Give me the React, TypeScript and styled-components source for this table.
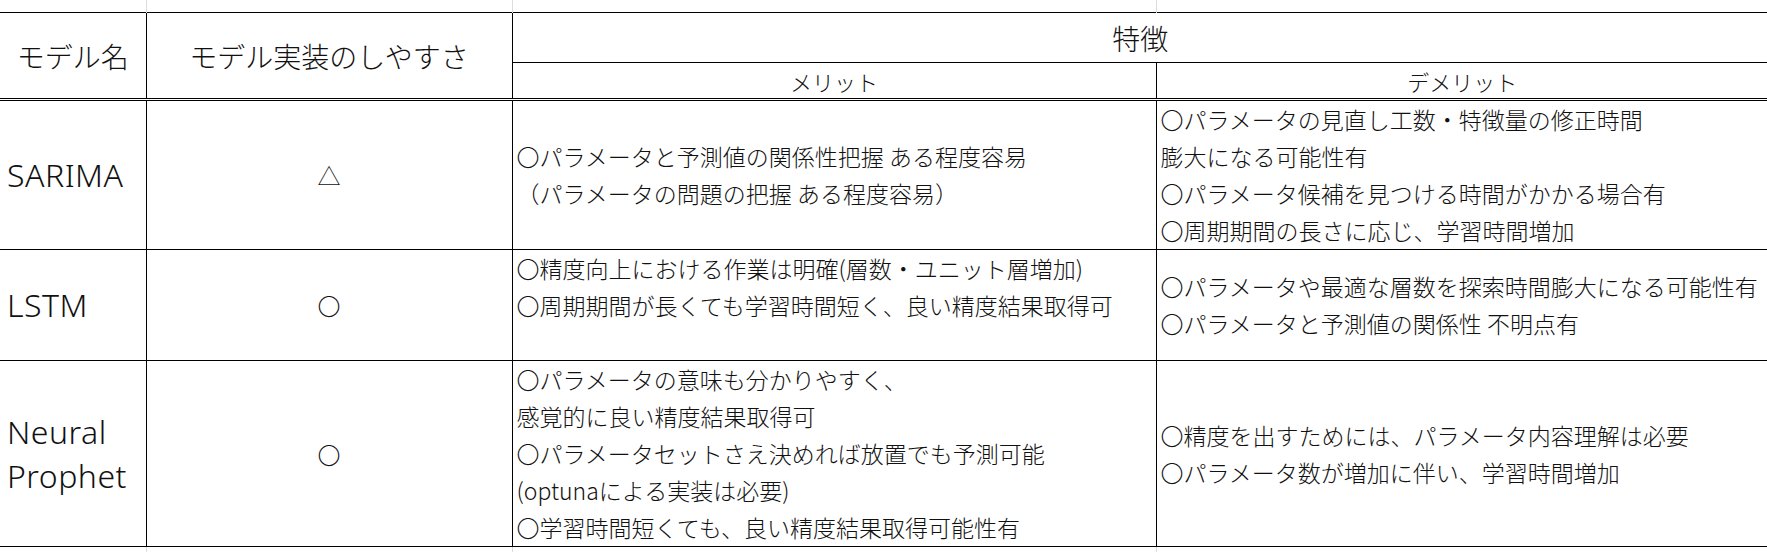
import styled, { createGlobalStyle } from "styled-components";

const GlobalStyle = createGlobalStyle`
  html, body {
    margin: 0;
    padding: 0;
    background: #fff;
  }
  body {
    font-family: "Noto Sans CJK JP", sans-serif;
    color: #111;
    overflow: hidden;
  }
`;

const Sheet = styled.table`
  border-collapse: collapse;
  table-layout: fixed;
  width: 1768px;
  td:last-child,
  th:last-child {
    border-right: none;
  }
`;

const GridCell = styled.td<{ $h: number }>`
  height: ${(p) => p.$h}px;
  padding: 0;
  border-right: 1px solid #dcdcdc;
`;

const HeadCell = styled.th<{ $size?: number; $double?: boolean }>`
  font-weight: 300;
  font-size: ${(p) => p.$size ?? 28}px;
  text-align: center;
  vertical-align: middle;
  padding: 0;
  border-top: 1px solid #000;
  border-right: 1px solid #000;
  border-bottom: ${(p) => (p.$double ? "3px double #000" : "1px solid #000")};
`;

const NameCell = styled.td`
  font-family: "Noto Sans", "Noto Sans CJK JP", sans-serif;
  font-weight: 300;
  font-size: 32px;
  line-height: 44px;
  letter-spacing: 0.5px;
  padding: 0 0 0 7px;
  vertical-align: middle;
  border-right: 1px solid #000;
  border-bottom: 1px solid #000;
`;

const MarkCell = styled.td`
  font-size: 23px;
  font-weight: 300;
  text-align: center;
  vertical-align: middle;
  padding: 0;
  border-right: 1px solid #000;
  border-bottom: 1px solid #000;
`;

const NoteCell = styled.td<{ $top?: boolean }>`
  font-size: 23px;
  font-weight: 300;
  line-height: 37px;
  padding: 0 4px;
  white-space: nowrap;
  overflow: hidden;
  vertical-align: ${(p) => (p.$top ? "top" : "middle")};
  border-right: 1px solid #000;
  border-bottom: 1px solid #000;
`;

const NoteLine = styled.div``;

interface IModel {
  name: string[];
  mark: string;
  height: number;
  merit: string[];
  demerit: string[];
  meritTop?: boolean;
}

const models: IModel[] = [
  {
    name: ["SARIMA"],
    mark: "△",
    height: 148,
    merit: [
      "〇パラメータと予測値の関係性把握 ある程度容易",
      "（パラメータの問題の把握 ある程度容易）",
    ],
    demerit: [
      "〇パラメータの見直し工数・特徴量の修正時間",
      "膨大になる可能性有",
      "〇パラメータ候補を見つける時間がかかる場合有",
      "〇周期期間の長さに応じ、学習時間増加",
    ],
  },
  {
    name: ["LSTM"],
    mark: "〇",
    height: 111,
    meritTop: true,
    merit: [
      "〇精度向上における作業は明確(層数・ユニット層増加)",
      "〇周期期間が長くても学習時間短く、良い精度結果取得可",
    ],
    demerit: [
      "〇パラメータや最適な層数を探索時間膨大になる可能性有",
      "〇パラメータと予測値の関係性 不明点有",
    ],
  },
  {
    name: ["Neural", "Prophet"],
    mark: "〇",
    height: 185,
    merit: [
      "〇パラメータの意味も分かりやすく、",
      "感覚的に良い精度結果取得可",
      "〇パラメータセットさえ決めれば放置でも予測可能",
      "(optunaによる実装は必要)",
      "〇学習時間短くても、良い精度結果取得可能性有",
    ],
    demerit: [
      "〇精度を出すためには、パラメータ内容理解は必要",
      "〇パラメータ数が増加に伴い、学習時間増加",
    ],
  },
];

function GridRow({ h }: { h: number }) {
  return (
    <tr>
      <GridCell $h={h} />
      <GridCell $h={h} />
      <GridCell $h={h} />
      <GridCell $h={h} />
    </tr>
  );
}

function App() {
  return (
    <>
      <GlobalStyle />
      <Sheet>
        <colgroup>
          <col style={{ width: 146 }} />
          <col style={{ width: 366 }} />
          <col style={{ width: 644 }} />
          <col style={{ width: 612 }} />
        </colgroup>
        <thead>
          <GridRow h={12} />
          <tr style={{ height: 50 }}>
            <HeadCell rowSpan={2} $double>モデル名</HeadCell>
            <HeadCell rowSpan={2} $double>モデル実装のしやすさ</HeadCell>
            <HeadCell colSpan={2}>特徴</HeadCell>
          </tr>
          <tr style={{ height: 37 }}>
            <HeadCell $size={22} $double>メリット</HeadCell>
            <HeadCell $size={22} $double>デメリット</HeadCell>
          </tr>
        </thead>
        <tbody>
          {models.map((m) => (
            <tr key={m.name.join(" ")} style={{ height: m.height }}>
              <NameCell>
                {m.name.map((n) => (
                  <NoteLine key={n}>{n}</NoteLine>
                ))}
              </NameCell>
              <MarkCell>{m.mark}</MarkCell>
              <NoteCell $top={m.meritTop}>
                {m.merit.map((t) => (
                  <NoteLine key={t}>{t}</NoteLine>
                ))}
              </NoteCell>
              <NoteCell>
                {m.demerit.map((t) => (
                  <NoteLine key={t}>{t}</NoteLine>
                ))}
              </NoteCell>
            </tr>
          ))}
          <GridRow h={20} />
        </tbody>
      </Sheet>
    </>
  );
}

export default App;
